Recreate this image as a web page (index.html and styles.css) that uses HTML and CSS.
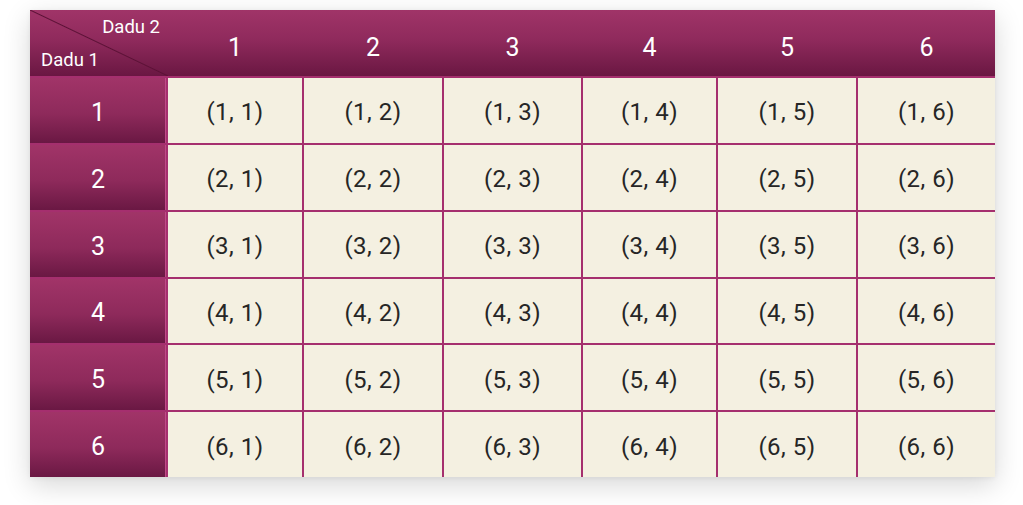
FILE: index.html
```html
<!DOCTYPE html>
<html lang="id">
<head>
<meta charset="utf-8">
<title>Tabel Dadu</title>
<link rel="stylesheet" href="styles.css">
</head>
<body>
<div class="dice-table">
  <div class="corner">
    <span class="corner-top">Dadu 2</span>
    <span class="corner-bottom">Dadu 1</span>
  </div>
  <div class="col-head">1</div>
  <div class="col-head">2</div>
  <div class="col-head">3</div>
  <div class="col-head">4</div>
  <div class="col-head">5</div>
  <div class="col-head">6</div>

  <div class="row-head">1</div>
  <div class="cell">(1, 1)</div><div class="cell">(1, 2)</div><div class="cell">(1, 3)</div><div class="cell">(1, 4)</div><div class="cell">(1, 5)</div><div class="cell">(1, 6)</div>

  <div class="row-head">2</div>
  <div class="cell">(2, 1)</div><div class="cell">(2, 2)</div><div class="cell">(2, 3)</div><div class="cell">(2, 4)</div><div class="cell">(2, 5)</div><div class="cell">(2, 6)</div>

  <div class="row-head">3</div>
  <div class="cell">(3, 1)</div><div class="cell">(3, 2)</div><div class="cell">(3, 3)</div><div class="cell">(3, 4)</div><div class="cell">(3, 5)</div><div class="cell">(3, 6)</div>

  <div class="row-head">4</div>
  <div class="cell">(4, 1)</div><div class="cell">(4, 2)</div><div class="cell">(4, 3)</div><div class="cell">(4, 4)</div><div class="cell">(4, 5)</div><div class="cell">(4, 6)</div>

  <div class="row-head">5</div>
  <div class="cell">(5, 1)</div><div class="cell">(5, 2)</div><div class="cell">(5, 3)</div><div class="cell">(5, 4)</div><div class="cell">(5, 5)</div><div class="cell">(5, 6)</div>

  <div class="row-head">6</div>
  <div class="cell">(6, 1)</div><div class="cell">(6, 2)</div><div class="cell">(6, 3)</div><div class="cell">(6, 4)</div><div class="cell">(6, 5)</div><div class="cell">(6, 6)</div>
</div>
</body>
</html>
```

FILE: styles.css
```css
* { box-sizing: border-box; }

html, body {
  margin: 0;
  background: #ffffff;
}

body {
  padding: 10px 28px 28px 30px;
  font-family: Roboto, "Liberation Sans", sans-serif;
}

.dice-table {
  width: 965px;
  height: 467px;
  display: grid;
  grid-template-columns: 136px 134px 138px 137px 133px 138px 1fr;
  grid-template-rows: 66px repeat(6, 1fr);
  gap: 2px;
  background:
    linear-gradient(to bottom, #a03468 0, #8f2a5c 30px, #6a1742 66px, #a52f6e 66px, #a52f6e 100%);
  box-shadow: 0 8px 26px rgba(0, 0, 0, 0.16), 0 1px 5px rgba(0, 0, 0, 0.06);
}

.corner {
  display: flex;
  flex-direction: column;
  justify-content: space-between;
  padding: 7px 8px 5px 11px;
  color: #ffffff;
  font-size: 18.5px;
  line-height: 21px;
  margin-right: -2px;
  background: linear-gradient(to top right, transparent calc(50% - 1px), #5c1136 50%, transparent calc(50% + 1px));
}

.corner-top { align-self: flex-end; }
.corner-bottom { align-self: flex-start; }

.col-head {
  display: flex;
  align-items: center;
  justify-content: center;
  padding-top: 8px;
  color: #ffffff;
  font-size: 25px;
}

.row-head {
  display: flex;
  align-items: center;
  justify-content: center;
  padding-top: 4px;
  color: #ffffff;
  font-size: 25px;
  background: linear-gradient(to bottom, #a13468 0%, #8e2a5b 55%, #6a1843 100%);
  box-shadow: inset -1px 0 0 #c04a88;
}

.cell {
  display: flex;
  align-items: center;
  justify-content: center;
  padding-top: 4px;
  background: #f4f0e1;
  color: #262626;
  font-size: 24px;
  letter-spacing: 0.5px;
}
```
